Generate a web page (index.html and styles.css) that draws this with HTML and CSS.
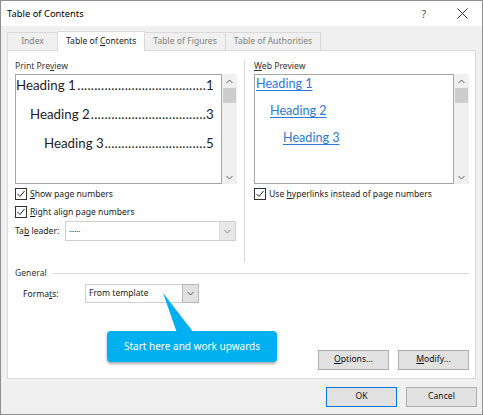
FILE: index.html
```html
<!DOCTYPE html>
<html>
<head>
<meta charset="utf-8">
<link rel="stylesheet" href="styles.css">
</head>
<body>
<div class="dialog">
  <div class="titlebar">
    <span class="title">Table of Contents</span>
    <span class="help">?</span>
    <span class="close"><svg width="11" height="11" viewBox="0 0 11 11"><path d="M0.5 0.5L10.5 10.5M10.5 0.5L0.5 10.5" stroke="#333" stroke-width="1" fill="none"/></svg></span>
  </div>
  <div class="tabs">
    <div class="tab index">Index</div>
    <div class="tab active">Table of <u>C</u>ontents</div>
    <div class="tab">Table of Figures</div>
    <div class="tab">Table of Authorities</div>
  </div>
  <div class="panel">
    <div class="columns">
      <div class="col col-left">
        <div class="label">Print Pre<u>v</u>iew</div>
        <div class="preview-row">
          <div class="preview print">
            <div class="entry"><span class="txt">Heading 1</span><span class="lead">......................................1</span></div>
            <div class="entry l2"><span class="txt">Heading 2</span><span class="lead">..................................3</span></div>
            <div class="entry l3"><span class="txt">Heading 3</span><span class="lead">..............................5</span></div>
          </div>
          <div class="scroll">
            <div class="sb-btn"><svg width="7" height="5" viewBox="0 0 7 5"><path d="M0.5 4L3.5 1L6.5 4" stroke="#606060" fill="none"/></svg></div>
            <div class="thumb"></div>
            <div class="sb-space"></div>
            <div class="sb-btn"><svg width="7" height="5" viewBox="0 0 7 5"><path d="M0.5 1L3.5 4L6.5 1" stroke="#606060" fill="none"/></svg></div>
          </div>
        </div>
        <div class="check first"><span class="box"><svg width="10" height="10" viewBox="0 0 10 10"><path d="M1.5 5L4 7.5L8.5 2" stroke="#222" fill="none"/></svg></span><span><u>S</u>how page numbers</span></div>
        <div class="check"><span class="box"><svg width="10" height="10" viewBox="0 0 10 10"><path d="M1.5 5L4 7.5L8.5 2" stroke="#222" fill="none"/></svg></span><span><u>R</u>ight align page numbers</span></div>
        <div class="leader-row">
          <span class="leader-label">Ta<u>b</u> leader:</span>
          <div class="combo leader"><span class="val dotsval">......</span><span class="arrow"><svg width="7" height="5" viewBox="0 0 7 5"><path d="M0.5 1L3.5 4L6.5 1" stroke="#8a8a8a" fill="none"/></svg></span></div>
        </div>
      </div>
      <div class="col col-right">
        <div class="label"><u>W</u>eb Preview</div>
        <div class="preview-row">
          <div class="preview web">
            <div class="link"><u>Heading 1</u></div>
            <div class="link l2"><u>Heading 2</u></div>
            <div class="link l3"><u>Heading 3</u></div>
          </div>
          <div class="scroll">
            <div class="sb-btn"><svg width="7" height="5" viewBox="0 0 7 5"><path d="M0.5 4L3.5 1L6.5 4" stroke="#606060" fill="none"/></svg></div>
            <div class="thumb"></div>
            <div class="sb-space"></div>
            <div class="sb-btn"><svg width="7" height="5" viewBox="0 0 7 5"><path d="M0.5 1L3.5 4L6.5 1" stroke="#606060" fill="none"/></svg></div>
          </div>
        </div>
        <div class="check first"><span class="box"><svg width="10" height="10" viewBox="0 0 10 10"><path d="M1.5 5L4 7.5L8.5 2" stroke="#222" fill="none"/></svg></span><span>Use <u>h</u>yperlinks instead of page numbers</span></div>
      </div>
    </div>
    <div class="general"><span>General</span><span class="rule"></span></div>
    <div class="formats-row">
      <span class="formats-label">Forma<u>t</u>s:</span>
      <div class="combo formats"><span class="val">From template</span><span class="arrow dark"><svg width="7" height="5" viewBox="0 0 7 5"><path d="M0.5 1L3.5 4L6.5 1" stroke="#555" fill="none"/></svg></span></div>
    </div>
    <div class="panel-buttons">
      <div class="btn"><u>O</u>ptions...</div>
      <div class="btn"><u>M</u>odify...</div>
    </div>
  </div>
  <div class="footer">
    <div class="btn ok">OK</div>
    <div class="btn">Cancel</div>
  </div>
  <div class="callout">
    <svg class="tail" width="36" height="42" viewBox="0 0 36 42"><polygon points="2,1 16,41 33,41" fill="#00b0f0"/></svg>
    <span class="callout-text">Start here and work upwards</span>
  </div>
</div>
</body>
</html>
```
FILE: styles.css
```css
* { box-sizing: border-box; }
body {
  margin: 0;
  font-family: "Noto Sans", "Open Sans", sans-serif;
  font-size: 8.6px;
  color: #1a1a1a;
  background: #ffffff;
}
u { text-decoration: underline; text-underline-offset: 1px; }

.dialog {
  position: relative;
  width: 483px;
  height: 415px;
  border: 1px solid #8f8f8f;
  background: #f0f0f0;
  display: flex;
  flex-direction: column;
}

.titlebar {
  height: 25px;
  background: #ffffff;
  display: flex;
  align-items: center;
  padding-left: 6px;
  font-size: 9.4px;
  color: #000;
}
.title { flex: 1; }
.help { width: 16px; text-align: center; color: #444; font-size: 10px; }
.close { width: 11px; height: 11px; margin-left: 25px; margin-right: 14px; display: flex; }

.tabs {
  height: 24px;
  display: flex;
  align-items: flex-end;
  padding-left: 6px;
}
.tab {
  height: 18px;
  line-height: 17px;
  padding: 0 8px;
  border: 1px solid #d9d9d9;
  border-bottom: none;
  color: #808080;
  background: #f0f0f0;
  margin-left: -1px;
  text-align: center;
}
.tab.index { margin-left: 0; min-width: 51px; }
.tab.active {
  height: 20px;
  line-height: 19px;
  background: #ffffff;
  color: #1a1a1a;
  margin-bottom: -1px;
  position: relative;
  z-index: 1;
  min-width: 87px;
}

.panel {
  width: 469px;
  height: 329px;
  margin-left: 6px;
  background: #ffffff;
  border: 1px solid #d9d9d9;
  padding: 9px 6px 8px 7px;
  display: flex;
  flex-direction: column;
}

.columns { display: flex; height: 202px; }
.col-left {
  width: 230px;
  padding-right: 7px;
  border-right: 1px solid #dcdcdc;
}
.col-right { margin-left: 9px; width: 215px; }

.label { height: 14px; line-height: 13px; color: #333; }

.preview-row { display: flex; height: 110px; }
.preview {
  border: 1px solid #a6a6a6;
  background: #fff;
  height: 110px;
}
.preview.print { width: 207px; padding-right: 7px; }
.preview.web { width: 200px; }

.entry {
  display: flex;
  justify-content: space-between;
  font-family: Lato, "Noto Sans", sans-serif;
  font-size: 13.3px;
  line-height: 20px;
  color: #1e1e1e;
  margin-bottom: 9px;
  white-space: nowrap;
}
.entry .lead { letter-spacing: 0.25px; }
.entry.l2 { padding-left: 14px; }
.entry.l3 { padding-left: 28px; }

.link {
  font-family: Lato, "Noto Sans", sans-serif;
  font-size: 12.6px;
  line-height: 18px;
  color: #2b7bd6;
  margin-bottom: 9px;
  padding-left: 1px;
}
.link u { text-underline-offset: 2px; }
.link.l2 { padding-left: 15px; }
.link.l3 { padding-left: 28px; }

.scroll {
  width: 15px;
  background: #f0f0f0;
  display: flex;
  flex-direction: column;
}
.sb-btn { height: 14px; display: flex; align-items: center; justify-content: center; }
.thumb { height: 15px; width: 13px; margin-left: 1px; background: #cdcdcd; }
.sb-space { flex: 1; }

.check {
  height: 18px;
  display: flex;
  align-items: center;
  color: #1a1a1a;
}
.check.first { margin-top: 1px; }
.box {
  width: 12px;
  height: 12px;
  border: 1px solid #333;
  margin-right: 3px;
  display: flex;
  align-items: center;
  justify-content: center;
  background: #fff;
}

.leader-row { display: flex; align-items: center; height: 20px; }
.leader-label { width: 50px; }

.combo {
  display: flex;
  height: 20px;
  border: 1px solid #cfcfcf;
  background: #fff;
}
.combo .val { flex: 1; padding-left: 3px; line-height: 17px; }
.combo .arrow {
  width: 16px;
  background: #e8e8e8;
  border-left: 1px solid #dcdcdc;
  display: flex;
  align-items: center;
  justify-content: center;
}
.combo .arrow.dark { background: #e1e1e1; border: 1px solid #b8b8b8; margin: -1px -1px -1px 0; width: 17px; }
.combo.leader { width: 171px; }
.combo .val.dotsval { font-size: 7px; letter-spacing: 0; line-height: 15px; }

.general {
  display: flex;
  align-items: center;
  height: 14px;
  margin-top: 4px;
  color: #333;
}
.general .rule { flex: 1; height: 1px; background: #dcdcdc; margin-left: 5px; }

.formats-row {
  display: flex;
  align-items: center;
  margin-top: 4px;
  padding-left: 8px;
}
.formats-label { width: 62px; }
.combo.formats { width: 114px; height: 19px; }
.combo.formats .val { line-height: 16px; color: #1a1a1a; }

.panel-buttons {
  margin-top: auto;
  display: flex;
  justify-content: flex-end;
  gap: 9px;
}

.btn {
  width: 71px;
  height: 20px;
  background: #e1e1e1;
  border: 1px solid #adadad;
  text-align: center;
  line-height: 17px;
  color: #111;
}
.btn.ok { border-color: #0078d7; }

.footer {
  display: flex;
  justify-content: flex-end;
  gap: 9px;
  margin-top: 8px;
  padding-right: 5px;
}

.callout {
  position: absolute;
  left: 106px;
  top: 330px;
  width: 170px;
  height: 31px;
  background: #00b0f0;
  border-radius: 4px;
  box-shadow: 0 2px 3px rgba(0, 0, 0, 0.35);
  color: #ffffff;
  font-size: 10px;
  text-align: center;
  line-height: 30px;
}
.tail { position: absolute; left: 54px; top: -39px; }
.callout-text { position: relative; }
```
